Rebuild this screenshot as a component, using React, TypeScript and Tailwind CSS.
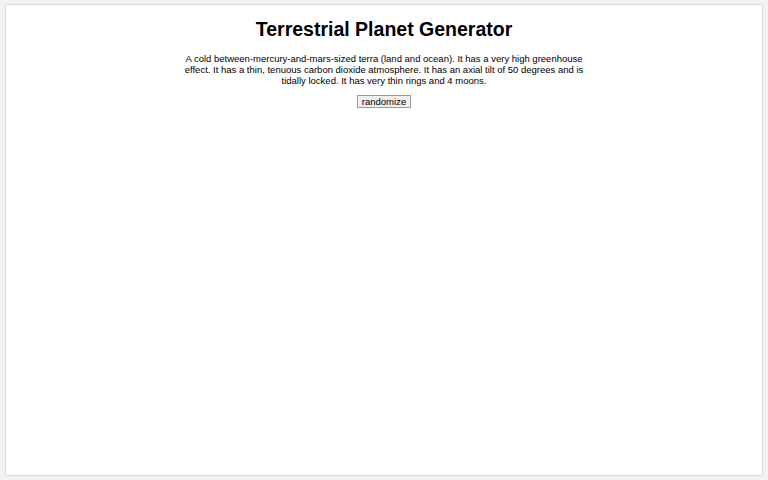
export default function App() {
  return (
    <div className="h-screen w-full bg-[#f2f2f2] pt-[4px] pb-[4px] pl-[5px] pr-[5px] font-['Liberation_Sans',Arial,sans-serif]">
      <div className="flex h-full flex-col items-center border border-[#dcdcdc] bg-white text-black">
        <h1 className="mt-[12px] text-[19.5px] font-bold leading-[24px]">Terrestrial Planet Generator</h1>
        <p className="mt-[12px] w-[404px] text-center text-[9.5px] leading-[11px]">
          A cold between-mercury-and-mars-sized terra (land and ocean). It has a very high greenhouse effect. It has a thin,
          tenuous carbon dioxide atmosphere. It has an axial tilt of 50 degrees and is tidally locked. It has very thin rings
          and 4 moons.
        </p>
        <button className="mt-[9px] border border-[#9a9a9a] bg-[#efefef] px-[4px] text-[9.5px] leading-[11px]">
          randomize
        </button>
      </div>
    </div>
  )
}
